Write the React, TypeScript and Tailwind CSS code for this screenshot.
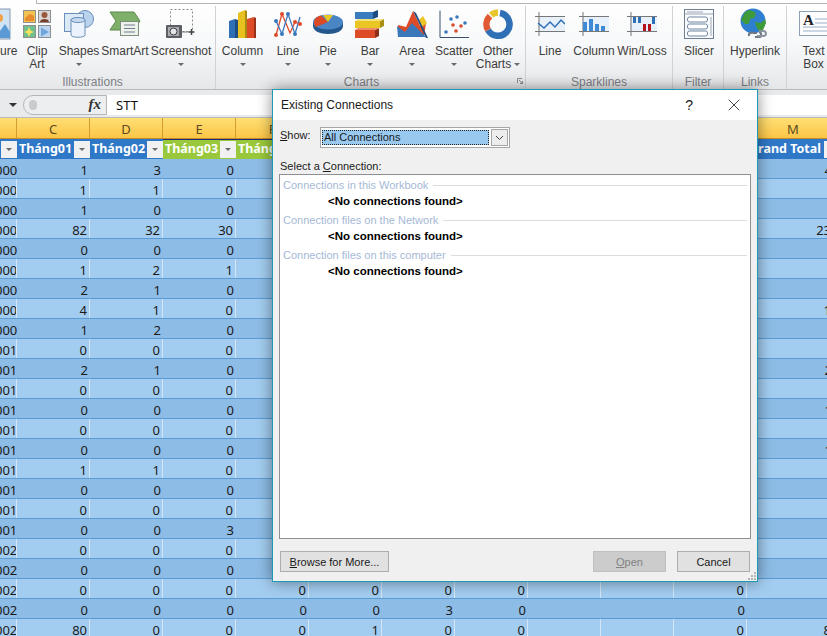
import { X } from "lucide-react";

const rows: string[][] = [
  ["1", "3", "0", "", "", "", "", "", "", "", "4"],
  ["1", "1", "0"],
  ["1", "0", "0"],
  ["82", "32", "30", "", "", "", "", "", "", "", "23"],
  ["0", "0", "0"],
  ["1", "2", "1"],
  ["2", "1", "0"],
  ["4", "1", "0", "", "", "", "", "", "", "", "1"],
  ["1", "2", "0"],
  ["0", "0", "0"],
  ["2", "1", "0", "", "", "", "", "", "", "", "2"],
  ["0", "0", "0"],
  ["0", "0", "0", "", "", "", "", "", "", "", "1"],
  ["0", "0", "0"],
  ["0", "0", "0", "", "", "", "", "", "", "", "1"],
  ["1", "1", "0"],
  ["0", "0", "0"],
  ["0", "0", "0"],
  ["0", "0", "3"],
  ["0", "0", "0"],
  ["0", "0", "0"],
  ["0", "0", "0", "0", "0", "0", "0", "", "", "0", ""],
  ["0", "0", "0", "0", "0", "3", "0", "", "", "0", ""],
  ["80", "0", "0", "0", "1", "0", "0", "", "", "0", "8"],
];

const columns = ["C", "D", "E", "F", "G", "H", "I", "J", "K", "L", "M"];

function sttCode(i: number) {
  return String(i + 1).padStart(4, "0");
}

function Caret({ className = "" }: { className?: string }) {
  return <span className={`block h-0 w-0 border-x-[3px] border-t-[3px] border-x-transparent border-t-[#6b6b6b] ${className}`} />;
}

function RibbonItem({ label, label2, caret, width, icon }: { label: string; label2?: React.ReactNode; caret?: boolean; width: string; icon: React.ReactNode }) {
  return (
    <div className={`flex shrink-0 flex-col items-center ${width}`}>
      <div className="flex h-[36px] items-center justify-center">{icon}</div>
      <div className="mt-[3px] text-center text-[12px] leading-[13px] text-[#3c3c3c]">
        <div className="whitespace-nowrap">{label}</div>
        {label2 && <div className="whitespace-nowrap">{label2}</div>}
      </div>
      {caret && <Caret className="mt-[5px]" />}
    </div>
  );
}

function RibbonGroup({ title, width, titleClass = "", children }: { title: string; width: string; titleClass?: string; children: React.ReactNode }) {
  return (
    <div className={`relative flex shrink-0 flex-col border-r border-[#d0d2d5] ${width}`}>
      <div className="flex h-[69px] justify-start">{children}</div>
      <div className={`text-center text-[12px] leading-[14px] text-[#7d7f85] ${titleClass}`}>{title}</div>
    </div>
  );
}

const PictureIcon = () => (
  <svg width="12" height="32" viewBox="0 0 12 32"><rect x="-20" y="1" width="30" height="30" fill="#cfe3f5" stroke="#8a9bb0" /><path d="M-5 30 L5 16 L10 24 V30Z" fill="#5a9bd5" /><circle cx="-1" cy="10" r="4" fill="#f3a04a" /></svg>
);
const ClipArtIcon = () => (
  <svg width="28" height="28" viewBox="0 0 28 28"><rect x=".5" y=".5" width="12" height="12" fill="#f2c14e" stroke="#8f8f8f" /><path d="M2 8l5-4 4 2v5H2z" fill="#e88a2e" /><rect x="15.5" y=".5" width="12" height="12" fill="#d8d8d8" stroke="#8f8f8f" /><circle cx="21.5" cy="5" r="3" fill="#9b5a3c" /><path d="M17 12c0-4 9-4 9 0z" fill="#7a3f2a" /><rect x=".5" y="15.5" width="12" height="12" fill="#6fbf8f" stroke="#8f8f8f" /><path d="M6 17l1.5 3.5L11 22l-3.500 1.500L6 27l-1.500-3.500L1 22l3.500-1.500z" fill="#f6e25c" /><rect x="15.500" y="15.500" width="12" height="12" fill="#bcd6f0" stroke="#8f8f8f" /><path d="M18 17.500l8 4.500-8 4.500z" fill="#6fa4dc" /></svg>
);
const ShapesIcon = () => (
  <svg width="30" height="28" viewBox="0 0 30 28"><circle cx="21" cy="9" r="8.500" fill="#b9d3ef" stroke="#6b8fb8" /><rect x=".5" y="3.500" width="19" height="18" fill="#dbe8f6" stroke="#6b8fb8" /><path d="M7 10c0-3 14-3 14 0v15c0 3-14 3-14 0z" fill="#eaf2fb" stroke="#6b8fb8" /><ellipse cx="14" cy="10" rx="7" ry="2.500" fill="#c6daf0" stroke="#6b8fb8" /></svg>
);
const SmartArtIcon = () => (
  <svg width="32" height="26" viewBox="0 0 32 26"><path d="M1 1h24l6 9-6 9H1l6-9z" fill="#7fb069" stroke="#5c8a4a" /><rect x="11.500" y="10.500" width="18" height="14" fill="#eef2ea" stroke="#7d8f80" /><path d="M15 14h11M15 17.500h11M15 21h11" stroke="#6d8092" /></svg>
);
const ScreenshotIcon = () => (
  <svg width="30" height="30" viewBox="0 0 30 30"><rect x="4.500" y=".5" width="22" height="22" fill="none" stroke="#8a8a8a" strokeDasharray="2 2" /><rect x="0" y="16" width="16" height="13" rx="1" fill="#5c5f63" /><rect x="2" y="18" width="11" height="9" fill="#a9adb1" /><circle cx="7.500" cy="22.500" r="3.500" fill="#e4e6e8" stroke="#3c3e41" /><path d="M25.500 20v6M22.500 23h6" stroke="#444" strokeWidth="1.500" /><path d="M16 23h6" stroke="#777" /></svg>
);
const ColumnIcon = () => (
  <svg width="30" height="30" viewBox="0 0 30 30"><path d="M1 12l6-2v19H1z" fill="#2f6fb5" /><path d="M7 10l3 1v18H7z" fill="#1f4e83" /><path d="M10 4l7-3v28h-7z" fill="#e8c020" /><path d="M17 1l2 1v27h-2z" fill="#a88a12" /><path d="M19 10l7-2v21h-7z" fill="#dd4b27" /><path d="M26 8l2 1v20h-2z" fill="#98311a" /></svg>
);
const LineIcon = () => (
  <svg width="28" height="26" viewBox="0 0 28 26"><path d="M2 24L8 3l8 19 5-11 5 2" fill="none" stroke="#df4a28" strokeWidth="1.300" /><path d="M2 10l6 13 6-20 7 20 5-17" fill="none" stroke="#3a78bd" strokeWidth="1.300" /><g fill="#df4a28"><circle cx="2" cy="24" r="2" /><circle cx="8" cy="3" r="2" /><circle cx="21" cy="11" r="2" /><circle cx="26" cy="13" r="2" /></g><g fill="#3a78bd"><circle cx="2" cy="10" r="2" /><circle cx="14" cy="3" r="2" /><circle cx="21" cy="23" r="2" /><circle cx="8" cy="23" r="2" /></g></svg>
);
const PieIcon = () => (
  <svg width="32" height="20" viewBox="0 0 32 20"><path d="M1 8v4c0 5 7 8 15 8s15-3 15-8V8z" fill="#24578e" /><ellipse cx="16" cy="8" rx="15" ry="7.500" fill="#4a86c6" /><path d="M16 8L4 13C-1 8 4 2 9 1.500z" fill="#db4a24" /><path d="M16 8L11 1h10z" fill="#e9c624" /></svg>
);
const BarIcon = () => (
  <svg width="30" height="28" viewBox="0 0 30 28"><path d="M0 2h18v7H0z" fill="#3b7cc0" /><path d="M18 2l5-2v7l-5 2z" fill="#1e4d80" /><path d="M0 11h25v7H0z" fill="#e9c624" /><path d="M25 11l4-2v7l-4 2z" fill="#a98f13" /><path d="M0 11l3-2h26l-4 2z" fill="#f4e37a" /><path d="M0 20h20v8H0z" fill="#dd4b27" /><path d="M20 20l4-2v8l-4 2z" fill="#8f2f18" /><path d="M0 20l3-2h21l-4 2z" fill="#ee8a6c" /></svg>
);
const AreaIcon = () => (
  <svg width="31" height="28" viewBox="0 0 31 28"><path d="M1 15l8 2 7-16 7 15 6-3-2 13H1z" fill="#dd4b27" /><path d="M22 10l4-4 4 7-5 4z" fill="#e9c624" /><path d="M0 16l8 6 7-9 7 7 7 7H1z" fill="#3b78ba" /><path d="M16 1l13 27h2L19 3z" fill="#1f4e83" /></svg>
);
const ScatterIcon = () => (
  <svg width="30" height="29" viewBox="0 0 30 29"><path d="M1 .5v27h29" fill="none" stroke="#39506e" /><g fill="#d94a27"><circle cx="14" cy="15" r="1.800" /><circle cx="17" cy="21" r="1.800" /><circle cx="22" cy="16" r="1.800" /></g><g fill="#3b78ba"><circle cx="7" cy="22" r="1.800" /><circle cx="12" cy="9" r="1.800" /><circle cx="18" cy="7" r="1.800" /><circle cx="26" cy="13" r="1.800" /></g></svg>
);
const OtherIcon = () => (
  <svg width="30" height="30" viewBox="0 0 30 30" fill="none"><path d="M17 4a11.500 11.500 0 1 1-12 17" stroke="#2f6fb5" strokeWidth="6.500" /><path d="M5 21a11.500 11.500 0 0 1 2-14" stroke="#df5a34" strokeWidth="6.500" /><path d="M8 6a11.500 11.500 0 0 1 7-2.500" stroke="#e8c72e" strokeWidth="6.500" /></svg>
);
const SparkLineIcon = () => (
  <svg width="30" height="24" viewBox="0 0 30 24"><rect x="3" y="4" width="27" height="15" fill="#e8f0fa" /><path d="M0 4.500h30M0 19.500h30M4 0v24" stroke="#777" /><path d="M3 11l6 5 6-6 5 5 6-7 4 4" fill="none" stroke="#2f6fb5" strokeWidth="1.500" /></svg>
);
const SparkColumnIcon = () => (
  <svg width="30" height="24" viewBox="0 0 30 24"><rect x="3" y="4" width="27" height="15" fill="#e8f0fa" /><path d="M0 4.500h30M0 19.500h30M4 0v24" stroke="#777" /><path d="M4 10h4v9H4zM10 7h4v12h-4zM16 12h4v7h-4zM22 14h4v5h-4z" fill="#3e8ad4" /></svg>
);
const SparkWinIcon = () => (
  <svg width="30" height="24" viewBox="0 0 30 24"><rect x="3" y="4" width="27" height="15" fill="#e8f0fa" /><path d="M0 4.500h30M0 19.500h30M4 0v24" stroke="#777" /><path d="M6 5h3v6H6zM11 5h3v6h-3zM25 5h3v7h-3z" fill="#2f6fb5" /><path d="M16 12h3v7h-3zM21 12h3v7h-3z" fill="#b4131c" /></svg>
);
const SlicerIcon = () => (
  <svg width="30" height="30" viewBox="0 0 30 30"><rect x=".5" y=".5" width="29" height="29" fill="#f8fafc" stroke="#6f7f92" /><path d="M1 5h28M3 3h16" stroke="#9aa7b6" /><rect x="3.500" y="8" width="20" height="5" rx="2" fill="#fff" stroke="#6f86a3" /><rect x="3.500" y="15" width="20" height="5" rx="2" fill="#fff" stroke="#6f86a3" /><rect x="3.500" y="22" width="20" height="5" rx="2" fill="#fff" stroke="#6f86a3" /><path d="M27 8v19" stroke="#9aa7b6" /></svg>
);
const HyperlinkIcon = () => (
  <svg width="32" height="32" viewBox="0 0 32 32"><circle cx="14" cy="13" r="12.500" fill="#2f7fd0" /><path d="M6 4c4-3 9-2 11 2l-2 4-4 1-1 5-4 0-4-4zM16 14l6 1 4-4 1 4-3 7-4 1-3-5z" fill="#3f9a3a" /><path d="M10 28c-1-3 3-4 5-3h3M16 29h4c3 0 3-4 0-5" fill="none" stroke="#6e7681" strokeWidth="2" /><path d="M18 28h6c4 0 4-5 0-5h-4" fill="none" stroke="#8a929c" strokeWidth="2" /></svg>
);
const TextBoxIcon = () => (
  <svg width="30" height="30" viewBox="0 0 30 30"><rect x=".5" y="2.500" width="29" height="24" fill="#fdfdfd" stroke="#8fa0b5" /><path d="M16 10h13M16 14h13M4 18h25M4 22h25" stroke="#9bb2cc" /><text x="4" y="16" fontFamily="Liberation Serif, serif" fontSize="15" fontWeight="700" fill="#222">A</text></svg>
);

function Ribbon() {
  return (
    <div className="relative h-[90px] shrink-0 overflow-hidden border-b border-[#b8babd] bg-gradient-to-b from-[#ffffff] via-[#f7f8f9] to-[#e6e7e9] font-['Liberation_Sans',sans-serif]">
      <div className="absolute top-0 left-[36px] h-[4px] w-[791px] border-b border-l border-[#b5b5b5] bg-white" />
      <div className="flex h-[90px] pt-[6px]">
        <RibbonGroup title="Illustrations" width="w-[216px]" titleClass="pr-[30px]">
          <RibbonItem label="ure" width="w-[13px] items-start" icon={<PictureIcon />} />
          <div className="w-[10px]" />
          <RibbonItem label="Clip" label2="Art" width="w-[28px]" icon={<ClipArtIcon />} />
          <div className="w-[4px]" />
          <RibbonItem label="Shapes" caret width="w-[48px]" icon={<ShapesIcon />} />
          <RibbonItem label="SmartArt" width="w-[44px]" icon={<SmartArtIcon />} />
          <RibbonItem label="Screenshot" caret width="w-[68px]" icon={<ScreenshotIcon />} />
        </RibbonGroup>
        <RibbonGroup title="Charts" width="w-[310px]" titleClass="pr-[18px]">
          <RibbonItem label="Column" caret width="w-[53px]" icon={<ColumnIcon />} />
          <RibbonItem label="Line" caret width="w-[38px]" icon={<LineIcon />} />
          <RibbonItem label="Pie" caret width="w-[42px]" icon={<PieIcon />} />
          <RibbonItem label="Bar" caret width="w-[42px]" icon={<BarIcon />} />
          <RibbonItem label="Area" caret width="w-[42px]" icon={<AreaIcon />} />
          <RibbonItem label="Scatter" caret width="w-[42px]" icon={<ScatterIcon />} />
          <RibbonItem
            label="Other"
            label2={<span className="inline-flex items-center gap-[3px]">Charts<Caret /></span>}
            width="w-[46px]"
            icon={<OtherIcon />}
          />
        </RibbonGroup>
        <RibbonGroup title="Sparklines" width="w-[147px]">
          <RibbonItem label="Line" width="w-[48px]" icon={<SparkLineIcon />} />
          <RibbonItem label="Column" width="w-[40px]" icon={<SparkColumnIcon />} />
          <RibbonItem label="Win/Loss" width="w-[56px]" icon={<SparkWinIcon />} />
        </RibbonGroup>
        <RibbonGroup title="Filter" width="w-[51px]">
          <RibbonItem label="Slicer" width="w-[52px]" icon={<SlicerIcon />} />
        </RibbonGroup>
        <RibbonGroup title="Links" width="w-[63px]">
          <RibbonItem label="Hyperlink" width="w-[62px]" icon={<HyperlinkIcon />} />
        </RibbonGroup>
        <div className="flex w-[53px] shrink-0 justify-center">
          <RibbonItem label="Text" label2="Box" width="w-[30px]" icon={<TextBoxIcon />} />
        </div>
      </div>
      <svg className="absolute top-[78px] left-[517px]" width="6" height="6" viewBox="0 0 6 6"><path d="M.5 5V.5H5M2 2l3.500 3.500M5.500 3v2.500H3" fill="none" stroke="#8a8c90" /></svg>
    </div>
  );
}

function FormulaBar() {
  return (
    <div className="flex h-[28px] shrink-0 items-center border-b border-[#b8babd] bg-[#e9eaec] pt-[2px]">
      <div className="flex h-[24px] w-[23px] items-center justify-end pr-[6px]"><span className="block h-0 w-0 border-x-[4px] border-t-[4px] border-x-transparent border-t-[#333]" /></div>
      <div className="flex h-[20px] w-[84px] items-center justify-between rounded-l-full border border-[#b5b7ba] bg-[#eceef0] pr-[5px] pl-[5px]">
        <span className="h-[10px] w-[8px] rounded-full bg-[#c9cbce]" />
        <span className="font-['Liberation_Serif',serif] text-[15px] font-bold text-[#333] italic">fx</span>
      </div>
      <div className="h-[20px] flex-1 bg-white pl-[9px] font-['Noto_Sans',sans-serif] text-[13px] leading-[20px] text-[#111]">STT</div>
    </div>
  );
}

function HeaderCell({ label, green, width }: { label: string; green?: boolean; width: string }) {
  return (
    <div className={`flex h-[20px] shrink-0 items-center ${width} ${green ? "border-t border-[#1b2a78] bg-[#9ac83c]" : "bg-[#2f78c8]"}`}>
      <span className="flex-1 overflow-hidden pl-[2px] text-[12.5px] font-bold whitespace-nowrap text-white">{label}</span>
      <span className="flex h-[17px] w-[16px] shrink-0 items-center justify-center bg-[#f1f1f1]"><Caret /></span>
    </div>
  );
}

function Sheet() {
  return (
    <div className="relative flex-1 overflow-hidden font-['Noto_Sans',sans-serif]">
      <div className="flex h-[21px] border-b border-[#c38a27] bg-gradient-to-b from-[#ffdf73] to-[#fbc545]">
        <div className="w-[17px] shrink-0 border-r border-[#d69b2f]" />
        {columns.map((c) => (
          <div key={c} className={`shrink-0 border-r border-[#d69b2f] text-center text-[13px] leading-[22px] text-[#5b4a1f] ${c === "M" ? "w-[93px]" : "w-[73px]"}`}>{c}</div>
        ))}
      </div>
      <div className="flex h-[20px] border-b border-[#5b9bd5]">
        <HeaderCell label="" width="w-[17px] justify-end" />
        <HeaderCell label="Tháng01" width="w-[73px]" />
        <HeaderCell label="Tháng02" width="w-[73px]" />
        <HeaderCell label="Tháng03" green width="w-[73px]" />
        <HeaderCell label="Tháng04" green width="w-[73px]" />
        <div className="w-[438px] shrink-0 bg-[#2f78c8]" />
        <HeaderCell label="Grand Total" width="w-[93px]" />
      </div>
      {rows.map((row, i) => (
        <div key={i} className={`flex h-[20px] border-b border-[#5b9bd5] text-[13px] leading-[22px] text-[#1a1a1a] ${i % 2 === 0 ? "bg-[#8dbce6]" : "bg-[#a3cdf0]"}`}>
          <div className={`w-[17px] shrink-0 overflow-hidden whitespace-nowrap ${i % 2 === 0 ? "" : "border-r border-[#d4e6f6]"}`}>
            <span className="ml-[-5px] block">{sttCode(i)}</span>
          </div>
          {columns.map((c, j) => (
            <div key={c} className={`shrink-0 pr-[2px] text-right whitespace-nowrap ${c === "M" ? "w-[93px] pr-[8px]" : "w-[73px]"} ${i % 2 === 0 ? "" : "border-r border-[#d4e6f6]"}`}>{row[j] ?? ""}</div>
          ))}
        </div>
      ))}
    </div>
  );
}

function GroupHeading({ title }: { title: string }) {
  return (
    <div className="flex h-[15px] items-center">
      <span className="text-[11px] leading-[15px] whitespace-nowrap text-[#a5b9d6]">{title}</span>
      <span className="ml-[5px] h-px flex-1 bg-[#dcdcdc]" />
    </div>
  );
}

function NoConnections() {
  return <div className="h-[20px] pl-[45px] text-[11.5px] leading-[16px] font-bold text-black">&lt;No connections found&gt;</div>;
}

function Dialog() {
  return (
    <div className="absolute top-[89px] left-[272px] flex h-[493px] w-[486px] flex-col border border-[#1c9ab4] bg-[#f0f0f0] font-['Liberation_Sans',sans-serif] text-[11px] text-[#1a1a1a] shadow-[0_0_14px_rgba(0,0,0,0.45)]">
      <div className="flex h-[30px] shrink-0 items-center bg-white pl-[8px]">
        <span className="flex-1 text-[12px]">Existing Connections</span>
        <span className="mr-[31px] text-[14px]">?</span>
        <X size={20} strokeWidth={1} className="mr-[13px] text-[#222]" />
      </div>
      <div className="flex h-[26px] items-start pt-[7px] pl-[7px]">
        <span className="mt-px w-[40px] leading-[14px]"><span className="underline">S</span>how:</span>
        <div className="flex h-[21px] w-[190px] items-center border border-[#a6a6a6] bg-white p-[1px]">
          <div className="h-[15px] flex-1 border border-dotted border-[#222] bg-[#99c9ef] pl-px text-[11px] leading-[13px]">All Connections</div>
          <div className="ml-[2px] flex h-[17px] w-[17px] items-center justify-center border border-[#a6a6a6] bg-[#ededed]">
            <svg width="9" height="6" viewBox="0 0 9 6"><path d="M1 1l3.500 3.500L8 1" fill="none" stroke="#444" /></svg>
          </div>
        </div>
      </div>
      <div className="mt-[13px] h-[15px] pl-[7px] leading-[15px]">Select a <span className="underline">C</span>onnection:</div>
      <div className="mx-[6px] h-[365px] border border-[#8e8e94] bg-white px-[3px] pt-[3px]">
        <GroupHeading title="Connections in this Workbook" />
        <NoConnections />
        <GroupHeading title="Connection files on the Network" />
        <NoConnections />
        <GroupHeading title="Connection files on this computer" />
        <NoConnections />
      </div>
      <div className="flex items-start justify-between pt-[12px] pr-[7px] pl-[7px]">
        <button className="h-[21px] w-[109px] border border-[#adadad] bg-[#e1e1e1] text-[11px] leading-[20px] text-[#1a1a1a]"><span className="underline">B</span>rowse for More...</button>
        <div className="flex gap-[11px]">
          <button className="h-[21px] w-[73px] border border-[#bfbfbf] bg-[#cccccc] text-[11px] leading-[20px] text-[#838383]"><span className="underline">O</span>pen</button>
          <button className="h-[21px] w-[73px] border border-[#adadad] bg-[#e1e1e1] text-[11px] leading-[20px] text-[#1a1a1a]">Cancel</button>
        </div>
      </div>
      <svg className="absolute right-0 bottom-0" width="9" height="9" viewBox="0 0 9 9" fill="#b5b5b5"><path d="M6 0h2v2H6zM3 3h2v2H3zM6 3h2v2H6zM0 6h2v2H0zM3 6h2v2H3zM6 6h2v2H6z" /></svg>
    </div>
  );
}

export default function App() {
  return (
    <div className="relative flex h-[636px] w-[827px] flex-col overflow-hidden bg-white">
      <Ribbon />
      <FormulaBar />
      <Sheet />
      <Dialog />
    </div>
  );
}
